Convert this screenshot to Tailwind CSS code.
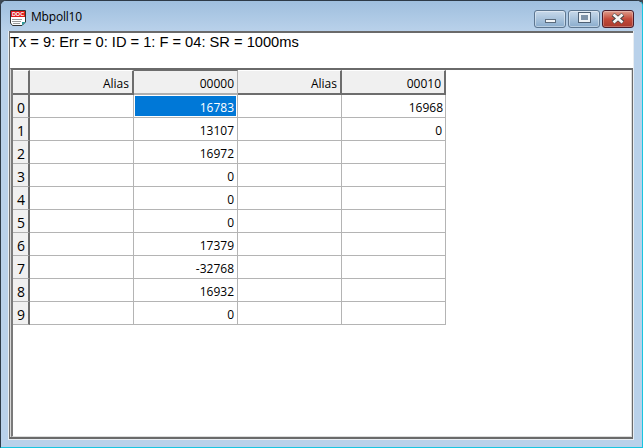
<!DOCTYPE html>
<html><head><meta charset="utf-8"><script src="https://cdn.jsdelivr.net/npm/@tailwindcss/browser@4"></script></head>
<body class="bg-[#3f4a55]">
<div class="w-[643px] h-[448px] overflow-hidden rounded-t-[6px] border border-[#2d3a47] border-b-[#19c5e0] border-r-[#19c5e0] bg-[#b9d1ea] flex flex-col font-['Open_Sans',sans-serif]">
  <div class="h-[30px] shrink-0 flex items-center pl-[8px] pr-[8px] bg-gradient-to-b from-[#9fbfde] to-[#b9d1ea]">
    <svg width="18" height="18" viewBox="0 0 18 18" class="mr-[3px] mt-[3px]">
      <path d="M1.5 1.5H16.5V13L13 16.5H3.5L1.5 14Z" fill="#fff" stroke="#333" stroke-width="1"/>
      <rect x="2" y="2" width="14" height="6" fill="#e01818"/>
      <path d="M3 10.5H13M3 12.5H12M4 14.5H11" stroke="#9a9a9a" stroke-width="1"/>
      <path d="M13 16.5V13H16.5Z" fill="#2a9a9a"/>
      <text x="9" y="7" text-anchor="middle" font-size="5.5" font-weight="700" fill="#fff" font-family="Liberation Sans">DOC</text>
    </svg>
    <span class="text-[12px] text-black ml-[1px] mt-[2px] tracking-[-0.2px]">Mbpoll10</span>
    <div class="ml-auto flex gap-[2px] mt-[5px]">
      <div class="w-[32px] h-[18px] rounded-[3px] border border-[#5d7690] bg-gradient-to-b from-[#c8d9ea] via-[#a9c3dc] to-[#8aaccd] flex items-center justify-center shadow-[inset_0_0_0_1px_#ffffff66]"><div class="w-[11px] h-[4px] mt-[5px] bg-[#f2f5f8] border border-[#5b6b7c]"></div></div>
      <div class="w-[32px] h-[18px] rounded-[3px] border border-[#5d7690] bg-gradient-to-b from-[#c8d9ea] via-[#a9c3dc] to-[#8aaccd] flex items-center justify-center shadow-[inset_0_0_0_1px_#ffffff66]"><div class="w-[11px] h-[9px] -mt-[2px] bg-[#7f93a8] border-[2px] border-[#eef2f6] outline outline-[#4e6074]"></div></div>
      <div class="w-[32px] h-[18px] rounded-[3px] border border-[#4a1c2a] bg-gradient-to-b from-[#dd9c8c] via-[#c44a3a] to-[#a93a2e] flex items-center justify-center shadow-[inset_0_0_0_1px_#ffffff44]">
        <svg width="14" height="11" viewBox="0 0 14 11"><path d="M2 1.5L12 9.5M12 1.5L2 9.5" stroke="#444" stroke-width="4.2"/><path d="M2.5 1.5L11.5 9.5M11.5 1.5L2.5 9.5" stroke="#f5f5f5" stroke-width="2.8"/></svg>
      </div>
    </div>
  </div>
  <div class="ml-[7px] mr-[8px] h-[409px] shrink-0 border border-[#e8edf2] border-t-0 bg-white">
    <div class="h-full border-t-[2px] border-l border-b-[2px] border-t-[#6a6a6a] border-l-[#6f6f6f] border-b-[#6a6a6a] bg-white flex flex-col">
      <div class="h-[35px] shrink-0 text-[14.67px] leading-[18px] text-black font-['Liberation_Sans',sans-serif]">Tx = 9: Err = 0: ID = 1: F = 04: SR = 1000ms</div>
      <div class="flex-1 border-t-[2px] border-t-[#6a6a6a] border-l border-l-[#d8d8d8] border-r border-r-[#6a6a6a]">
      <div class="h-full border-l-[2px] border-l-[#7a7a7a] border-r border-r-[#dcdcdc] border-b border-b-[#dcdcdc] text-[12px] text-black">
        <div class="grid grid-cols-[17px_repeat(4,104px)] grid-rows-[25px_repeat(10,23px)] leading-[26px] text-right">
          <div class="bg-[#f0f0f0] border-r-[2px] border-b-[2px] border-[#6d6d6d] border-t border-t-white"></div>
          <div class="bg-[#f0f0f0] border-b-[2px] border-[#6d6d6d] pr-[3px] border-r-[2px] border-t border-t-white">Alias</div>
          <div class="bg-[#f0f0f0] border-b-[2px] border-[#b0b0b0] pr-[3px] border-r border-t border-t-[#6d6d6d]">00000</div>
          <div class="bg-[#f0f0f0] border-b-[2px] border-[#6d6d6d] pr-[3px] border-r-[2px] border-t border-t-white">Alias</div>
          <div class="bg-[#f0f0f0] border-b-[2px] border-[#6d6d6d] pr-[3px] border-r-[2px] border-t border-t-white">00010</div>

          <div class="bg-[#f0f0f0] border-r-[2px] border-b border-[#6d6d6d] border-b-[#b0b0b0] text-center text-[14px] pl-px font-medium">0</div>
          <div class="border-r border-b border-[#b4b4b4]"></div>
          <div class="border-r border-b border-[#b4b4b4] pl-px pr-px pt-px"><div class="bg-[#0078d7] text-white h-[20px] leading-[24px] pr-[2px] overflow-hidden">16783</div></div>
          <div class="border-r border-b border-[#b4b4b4]"></div>
          <div class="border-r border-b border-[#b4b4b4] pr-[2px]">16968</div>

          <div class="bg-[#f0f0f0] border-r-[2px] border-b border-[#6d6d6d] border-b-[#b0b0b0] text-center text-[14px] pl-px font-medium">1</div>
          <div class="border-r border-b border-[#b4b4b4]"></div>
          <div class="border-r border-b border-[#b4b4b4] pr-[3px]">13107</div>
          <div class="border-r border-b border-[#b4b4b4]"></div>
          <div class="border-r border-b border-[#b4b4b4] pr-[3px]">0</div>

          <div class="bg-[#f0f0f0] border-r-[2px] border-b border-[#6d6d6d] border-b-[#b0b0b0] text-center text-[14px] pl-px font-medium">2</div>
          <div class="border-r border-b border-[#b4b4b4]"></div>
          <div class="border-r border-b border-[#b4b4b4] pr-[3px]">16972</div>
          <div class="border-r border-b border-[#b4b4b4]"></div>
          <div class="border-r border-b border-[#b4b4b4]"></div>

          <div class="bg-[#f0f0f0] border-r-[2px] border-b border-[#6d6d6d] border-b-[#b0b0b0] text-center text-[14px] pl-px font-medium">3</div>
          <div class="border-r border-b border-[#b4b4b4]"></div>
          <div class="border-r border-b border-[#b4b4b4] pr-[3px]">0</div>
          <div class="border-r border-b border-[#b4b4b4]"></div>
          <div class="border-r border-b border-[#b4b4b4]"></div>

          <div class="bg-[#f0f0f0] border-r-[2px] border-b border-[#6d6d6d] border-b-[#b0b0b0] text-center text-[14px] pl-px font-medium">4</div>
          <div class="border-r border-b border-[#b4b4b4]"></div>
          <div class="border-r border-b border-[#b4b4b4] pr-[3px]">0</div>
          <div class="border-r border-b border-[#b4b4b4]"></div>
          <div class="border-r border-b border-[#b4b4b4]"></div>

          <div class="bg-[#f0f0f0] border-r-[2px] border-b border-[#6d6d6d] border-b-[#b0b0b0] text-center text-[14px] pl-px font-medium">5</div>
          <div class="border-r border-b border-[#b4b4b4]"></div>
          <div class="border-r border-b border-[#b4b4b4] pr-[3px]">0</div>
          <div class="border-r border-b border-[#b4b4b4]"></div>
          <div class="border-r border-b border-[#b4b4b4]"></div>

          <div class="bg-[#f0f0f0] border-r-[2px] border-b border-[#6d6d6d] border-b-[#b0b0b0] text-center text-[14px] pl-px font-medium">6</div>
          <div class="border-r border-b border-[#b4b4b4]"></div>
          <div class="border-r border-b border-[#b4b4b4] pr-[3px]">17379</div>
          <div class="border-r border-b border-[#b4b4b4]"></div>
          <div class="border-r border-b border-[#b4b4b4]"></div>

          <div class="bg-[#f0f0f0] border-r-[2px] border-b border-[#6d6d6d] border-b-[#b0b0b0] text-center text-[14px] pl-px font-medium">7</div>
          <div class="border-r border-b border-[#b4b4b4]"></div>
          <div class="border-r border-b border-[#b4b4b4] pr-[3px]">-32768</div>
          <div class="border-r border-b border-[#b4b4b4]"></div>
          <div class="border-r border-b border-[#b4b4b4]"></div>

          <div class="bg-[#f0f0f0] border-r-[2px] border-b border-[#6d6d6d] border-b-[#b0b0b0] text-center text-[14px] pl-px font-medium">8</div>
          <div class="border-r border-b border-[#b4b4b4]"></div>
          <div class="border-r border-b border-[#b4b4b4] pr-[3px]">16932</div>
          <div class="border-r border-b border-[#b4b4b4]"></div>
          <div class="border-r border-b border-[#b4b4b4]"></div>

          <div class="bg-[#f0f0f0] border-r-[2px] border-b border-[#6d6d6d] border-b-[#b0b0b0] text-center text-[14px] pl-px font-medium">9</div>
          <div class="border-r border-b border-[#b4b4b4]"></div>
          <div class="border-r border-b border-[#b4b4b4] pr-[3px]">0</div>
          <div class="border-r border-b border-[#b4b4b4]"></div>
          <div class="border-r border-b border-[#b4b4b4]"></div>
        </div>
      </div>
      </div>
    </div>
  </div>
</div>
</body></html>
